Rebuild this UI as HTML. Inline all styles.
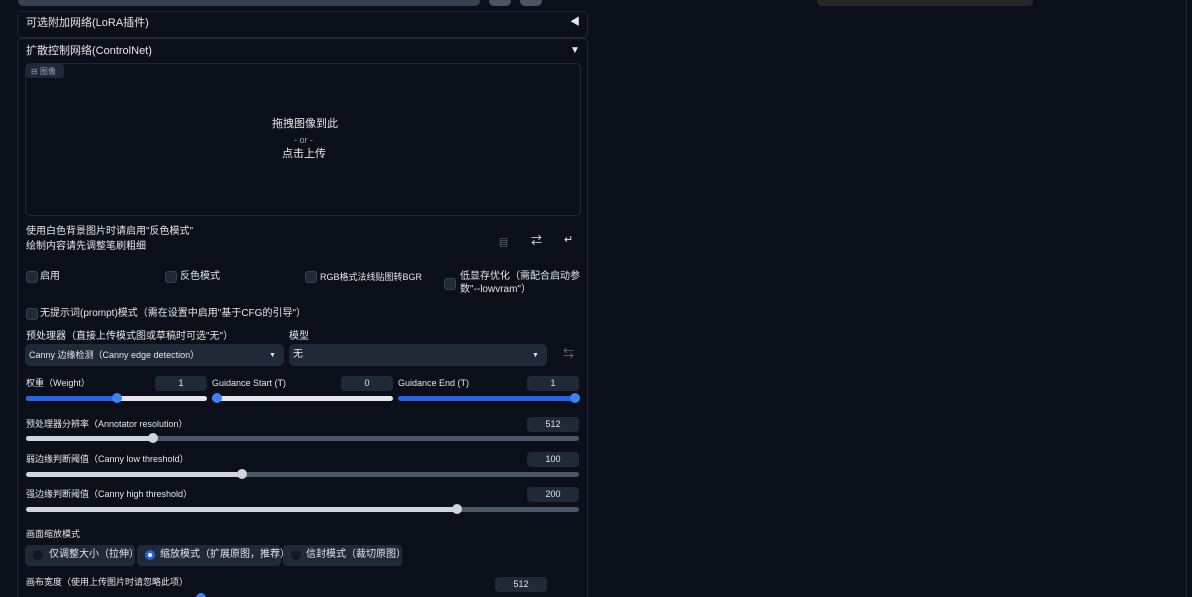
<html><head><style>
html{overflow:hidden;height:597px}
body{margin:0;width:1192px;height:597px;background:#0b0f19;position:relative;overflow:hidden;font-family:"Liberation Sans","Noto Sans CJK SC",sans-serif;color:#e5e7eb;font-size:10px;line-height:14px}
.a{position:absolute}
.t{position:absolute;white-space:nowrap}
.cb{position:absolute;width:10px;height:10px;border-radius:3px;background:#1f2937;border:1px solid #374151}
.num{position:absolute;height:15px;background:#1f2937;border-radius:4px;text-align:center;line-height:15px;font-size:9px;color:#e5e7eb}
.trk{position:absolute;height:5px;border-radius:3px}
.th{position:absolute;width:10px;height:10px;border-radius:50%}
</style></head><body>
<div class="a" style="left:18px;top:-6px;width:462px;height:12px;background:#374151;border-radius:5px"></div>
<div class="a" style="left:489px;top:-6px;width:22px;height:12px;background:#4b5563;border-radius:5px"></div>
<div class="a" style="left:520px;top:-6px;width:22px;height:12px;background:#4b5563;border-radius:5px"></div>
<div class="a" style="left:817px;top:-6px;width:216px;height:12px;background:#27272a;border-radius:4px"></div>
<div class="a" style="left:1186px;top:0;width:1px;height:597px;background:#1f2937"></div>

<div class="a" style="left:17px;top:11px;width:569px;height:25px;border:1px solid #1f2937;border-radius:5px;background:#0b0f19"></div>
<div class="t" style="left:26px;top:16px;font-size:11px">可选附加网络(LoRA插件)</div>
<div class="t" style="left:570px;top:16px;font-size:10px">◀</div>
<div class="a" style="left:17px;top:38px;width:569px;height:570px;border:1px solid #1f2937;border-radius:5px"></div>
<div class="t" style="left:26px;top:44px;font-size:11px">扩散控制网络(ControlNet)</div>
<div class="t" style="left:570px;top:44px;font-size:10px">▼</div>

<div class="a" style="left:25px;top:63px;width:554px;height:151px;border:1px solid #1f2937;border-radius:5px"></div>
<div class="a" style="left:26px;top:64px;width:38px;height:14px;background:#1f2937;border-radius:3px"></div>
<div class="t" style="left:31px;top:65px;font-size:8px;color:#9ca3af">⊟ 图像</div>
<div class="t" style="left:272px;top:117px;font-size:11px">拖拽图像到此</div>
<div class="t" style="left:294px;top:133px;font-size:9px;color:#9ca3af">- or -</div>
<div class="t" style="left:282px;top:147px;font-size:11px">点击上传</div>

<div class="t" style="left:26px;top:225px">使用白色背景图片时请启用"反色模式"</div>
<div class="t" style="left:26px;top:240px">绘制内容请先调整笔刷粗细</div>
<div class="t" style="left:499px;top:236px;font-size:9px;color:#9ca3af">▤</div>
<div class="t" style="left:531px;top:234px;font-size:11px">⇄</div>
<div class="t" style="left:564px;top:233px;font-size:11px">↵</div>

<div class="cb" style="left:26px;top:271px"></div><div class="t" style="left:40px;top:270px">启用</div>
<div class="cb" style="left:165px;top:271px"></div><div class="t" style="left:180px;top:270px">反色模式</div>
<div class="cb" style="left:305px;top:271px"></div><div class="t" style="left:320px;top:270px;font-size:9px">RGB格式法线贴图转BGR</div>
<div class="cb" style="left:444px;top:278px"></div><div class="t" style="left:460px;top:270px">低显存优化（需配合启动参</div><div class="t" style="left:460px;top:283px">数"--lowvram"）</div>
<div class="cb" style="left:26px;top:308px"></div><div class="t" style="left:40px;top:307px">无提示词(prompt)模式（需在设置中启用"基于CFG的引导"）</div>

<div class="t" style="left:26px;top:330px">预处理器（直接上传模式图或草稿时可选"无"）</div>
<div class="t" style="left:289px;top:330px">模型</div>
<div class="a" style="left:25px;top:344px;width:259px;height:22px;background:#1f2937;border-radius:5px"></div>
<div class="t" style="left:29px;top:348px;font-size:9px">Canny 边缘检测（Canny edge detection）</div>
<div class="t" style="left:269px;top:349px;font-size:7px">▼</div>
<div class="a" style="left:289px;top:344px;width:258px;height:22px;background:#1f2937;border-radius:5px"></div>
<div class="t" style="left:293px;top:348px">无</div>
<div class="t" style="left:532px;top:349px;font-size:7px">▼</div>
<div class="t" style="left:563px;top:347px;font-size:11px;color:#6b7280">⇆</div>

<div class="t" style="left:26px;top:376px;font-size:9px">权重（Weight）</div>
<div class="num" style="left:155px;top:376px;width:52px">1</div>
<div class="t" style="left:212px;top:376px;font-size:9px">Guidance Start (T)</div>
<div class="num" style="left:341px;top:376px;width:52px">0</div>
<div class="t" style="left:398px;top:376px;font-size:9px">Guidance End (T)</div>
<div class="num" style="left:527px;top:376px;width:52px">1</div>
<div class="trk" style="left:26px;top:396px;width:181px;background:#e5e7eb"></div>
<div class="trk" style="left:26px;top:396px;width:91px;background:#2563eb"></div>
<div class="th" style="left:112px;top:393px;background:#3b82f6"></div>
<div class="trk" style="left:212px;top:396px;width:181px;background:#e5e7eb"></div>
<div class="th" style="left:212px;top:393px;background:#3b82f6"></div>
<div class="trk" style="left:398px;top:396px;width:181px;background:#2563eb"></div>
<div class="th" style="left:570px;top:393px;background:#3b82f6"></div>

<div class="t" style="left:26px;top:417px;font-size:9px">预处理器分辨率（Annotator resolution）</div>
<div class="num" style="left:527px;top:417px;width:52px">512</div>
<div class="trk" style="left:26px;top:436px;width:553px;background:#4b5563"></div>
<div class="trk" style="left:26px;top:436px;width:128px;background:#d1d5db"></div>
<div class="th" style="left:148px;top:433px;background:#d1d5db"></div>

<div class="t" style="left:26px;top:452px;font-size:9px">弱边缘判断阈值（Canny low threshold）</div>
<div class="num" style="left:527px;top:452px;width:52px">100</div>
<div class="trk" style="left:26px;top:472px;width:553px;background:#4b5563"></div>
<div class="trk" style="left:26px;top:472px;width:216px;background:#d1d5db"></div>
<div class="th" style="left:237px;top:469px;background:#d1d5db"></div>

<div class="t" style="left:26px;top:487px;font-size:9px">强边缘判断阈值（Canny high threshold）</div>
<div class="num" style="left:527px;top:487px;width:52px">200</div>
<div class="trk" style="left:26px;top:507px;width:553px;background:#4b5563"></div>
<div class="trk" style="left:26px;top:507px;width:431px;background:#d1d5db"></div>
<div class="th" style="left:452px;top:504px;background:#d1d5db"></div>

<div class="t" style="left:26px;top:527px;font-size:9px">画面缩放模式</div>
<div class="a" style="left:25px;top:545px;width:110px;height:21px;background:#1f2937;border-radius:4px"></div>
<div class="a" style="left:33px;top:550px;width:10px;height:10px;border-radius:50%;background:#111827"></div>
<div class="t" style="left:49px;top:548px">仅调整大小（拉伸）</div>
<div class="a" style="left:137px;top:545px;width:144px;height:21px;background:#1f2937;border-radius:4px"></div>
<div class="a" style="left:145px;top:550px;width:10px;height:10px;border-radius:50%;background:#2563eb"></div>
<div class="a" style="left:148px;top:553px;width:4px;height:4px;border-radius:50%;background:#fff"></div>
<div class="t" style="left:160px;top:548px">缩放模式（扩展原图，推荐）</div>
<div class="a" style="left:283px;top:545px;width:119px;height:21px;background:#1f2937;border-radius:4px"></div>
<div class="a" style="left:291px;top:550px;width:10px;height:10px;border-radius:50%;background:#111827"></div>
<div class="t" style="left:306px;top:548px">信封模式（裁切原图）</div>

<div class="t" style="left:26px;top:575px;font-size:9px">画布宽度（使用上传图片时请忽略此项）</div>
<div class="num" style="left:495px;top:577px;width:52px">512</div>
<div class="th" style="left:196px;top:593px;background:#3b82f6"></div>
</body></html>
